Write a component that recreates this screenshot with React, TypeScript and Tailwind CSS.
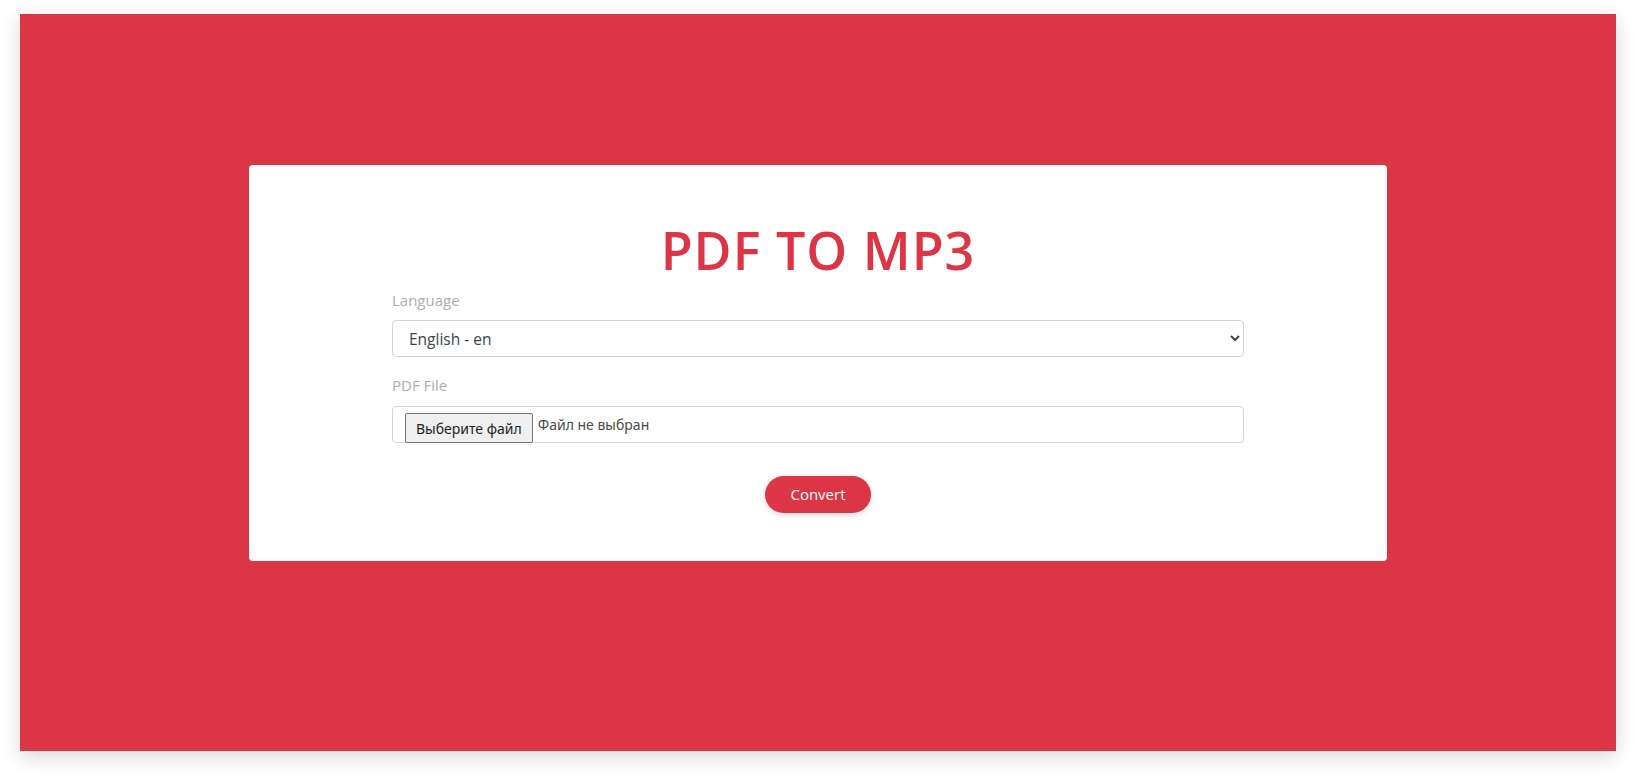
import { useState } from 'react';

const languages = [
  { code: 'en', name: 'English' },
  { code: 'ru', name: 'Russian' },
  { code: 'de', name: 'German' },
  { code: 'fr', name: 'French' },
  { code: 'es', name: 'Spanish' },
];

export default function App() {
  const [lang, setLang] = useState('en');
  const [fileName, setFileName] = useState<string | null>(null);

  return (
    <div className="min-h-[777px] bg-white pt-[14px] px-[20px] pb-[26px] font-['Open_Sans',sans-serif]">
      <main className="h-[737px] bg-[#dc3545] shadow-[0_6px_20px_rgba(0,0,0,0.16)] flex justify-center pt-[151px]">
        <div className="w-[1138px] h-[396px] bg-white rounded-[4px] flex flex-col items-center pt-[54px]">
          <h1 className="text-[52px] leading-[61px] font-semibold text-[#dc3545] tracking-[1px]">PDF TO MP3</h1>

          <form className="w-[852px] mt-[8px] flex flex-col" onSubmit={(e) => e.preventDefault()}>
            <label htmlFor="lang" className="text-[15px] leading-[24px] text-[#adadad]">
              Language
            </label>
            <select
              id="lang"
              value={lang}
              onChange={(e) => setLang(e.target.value)}
              className="mt-[8px] h-[37px] w-full rounded-[4px] border border-[#ced4da] bg-white pl-[12px] pr-[8px] text-[15.5px] text-[#3d434a] outline-none"
            >
              {languages.map((l) => (
                <option key={l.code} value={l.code}>
                  {l.name} - {l.code}
                </option>
              ))}
            </select>

            <label htmlFor="pdf" className="mt-[16px] text-[15px] leading-[24px] text-[#adadad]">
              PDF File
            </label>
            <label
              htmlFor="pdf"
              className="mt-[9px] h-[37px] w-full rounded-[4px] border border-[#ced4da] bg-white flex items-end pl-[12px] cursor-pointer"
            >
              <span className="h-[30px] px-[10px] flex items-center rounded-[2px] border border-[#767676] bg-[#efefef] text-[14px] text-[#222] font-['Noto_Sans',sans-serif] mb-[-1px]">
                Выберите файл
              </span>
              <span className="self-center ml-[5px] text-[14px] text-[#4a4a4a] font-['Noto_Sans',sans-serif]">
                {fileName ?? 'Файл не выбран'}
              </span>
              <input
                id="pdf"
                type="file"
                accept="application/pdf"
                className="hidden"
                onChange={(e) => setFileName(e.target.files?.[0]?.name ?? null)}
              />
            </label>

            <div className="mt-[33px] flex justify-center">
              <button
                type="submit"
                className="h-[37px] w-[106px] rounded-full bg-[#dc3545] text-white text-[15px] shadow-[0_2px_6px_rgba(0,0,0,0.15)]"
              >
                Convert
              </button>
            </div>
          </form>
        </div>
      </main>
    </div>
  );
}
